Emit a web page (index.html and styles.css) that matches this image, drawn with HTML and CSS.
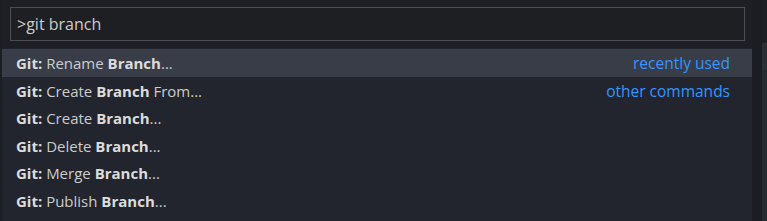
FILE: index.html
```html
<html>
	<head>
		<meta charset="utf-8" />
		<title>Quick Open</title>
		<link rel="stylesheet" href="styles.css">
	</head>
	<body>
		<div class="editor">
			<div class="gutter"></div>
			<div class="quick-open">
				<div class="input-wrap">
					<div class="input">&gt;git branch</div>
				</div>
				<div class="list">
					<div class="row selected">
						<span class="label"><b>Git:</b> Rename <b>Branch</b>...</span>
						<span class="tag">recently used</span>
					</div>
					<div class="row">
						<span class="label"><b>Git:</b> Create <b>Branch</b> From...</span>
						<span class="tag">other commands</span>
					</div>
					<div class="row">
						<span class="label"><b>Git:</b> Create <b>Branch</b>...</span>
					</div>
					<div class="row">
						<span class="label"><b>Git:</b> Delete <b>Branch</b>...</span>
					</div>
					<div class="row">
						<span class="label"><b>Git:</b> Merge <b>Branch</b>...</span>
					</div>
					<div class="row">
						<span class="label"><b>Git:</b> Publish <b>Branch</b>...</span>
					</div>
				</div>
			</div>
			<div class="shadow"></div>
			<div class="side">
				<div class="side-top"></div>
				<div class="side-band"></div>
				<div class="side-rest"></div>
			</div>
		</div>
	</body>
</html>
```

FILE: styles.css
```css
body{
	margin: 0;
	background: #262a33;
	font-family: "Open Sans", "Noto Sans", sans-serif;
	overflow: hidden;
}
.editor{
	display: flex;
	width: 767px;
	height: 221px;
}
.gutter{
	width: 2px;
	background: #1c1e23;
}
.quick-open{
	width: 750px;
	background: #22252d;
}
.input-wrap{
	padding: 7px 7px 7px 8px;
	background: #1e1f24;
}
.input{
	height: 32px;
	border: 1px solid #4a4c52;
	background: #1e1f23;
	color: #cccccc;
	font-size: 16px;
	line-height: 32px;
	padding-left: 6px;
}
.list{
	padding-top: 1px;
}
.row{
	display: flex;
	justify-content: space-between;
	align-items: center;
	height: 27.5px;
	padding: 0 22px 0 14px;
	color: #cccccc;
	font-size: 15px;
}
.row.selected{
	height: 28px;
	background: #393d47;
}
.row b{
	color: #dcdcdc;
	font-weight: 700;
}
.tag{
	color: #3794ff;
	font-size: 15.5px;
}
.shadow{
	width: 10px;
	background: #1b1d22;
}
.side{
	flex: 1;
	display: flex;
	flex-direction: column;
}
.side-top{
	height: 43px;
	background: #1e1f24;
}
.side-band{
	height: 27px;
	background: #2b2e36;
}
.side-rest{
	flex: 1;
	background: #262a33;
}
```
